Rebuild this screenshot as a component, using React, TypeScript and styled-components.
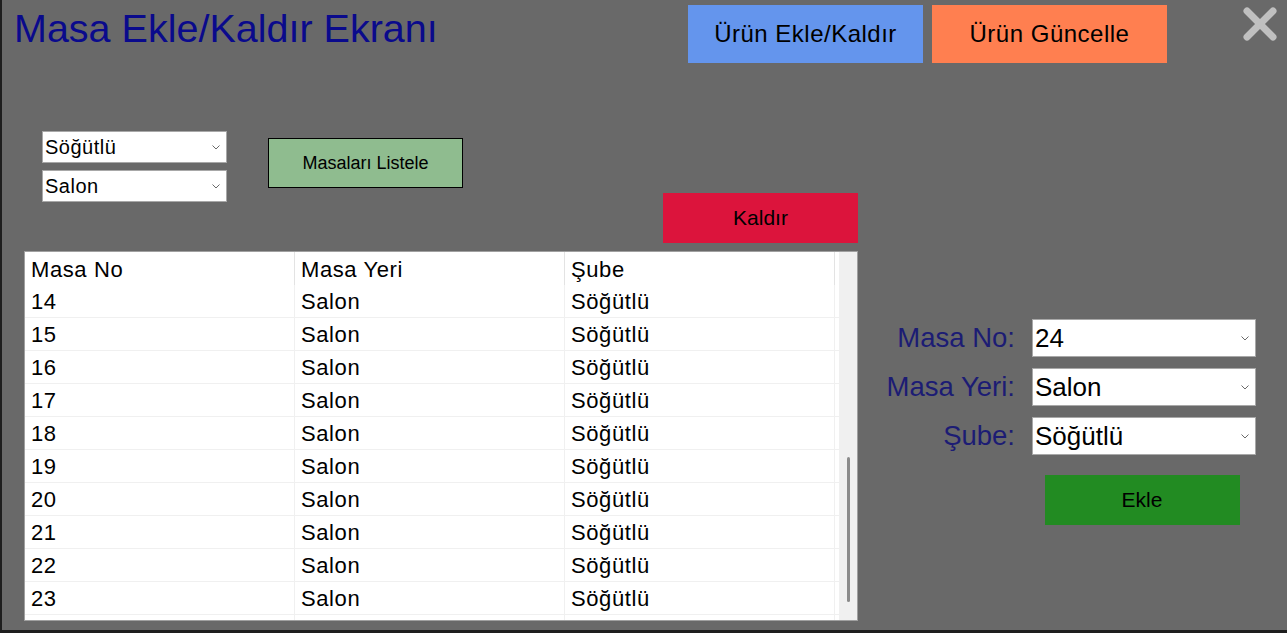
import React from 'react'
import styled, { createGlobalStyle } from 'styled-components'

const GlobalStyle = createGlobalStyle`
  html, body {
    margin: 0;
    padding: 0;
    background: #1e1e1e;
    overflow: hidden;
  }
  * {
    box-sizing: border-box;
  }
`;

const FONT = `"Liberation Sans", Arial, sans-serif`;

const rows = [14, 15, 16, 17, 18, 19, 20, 21, 22, 23];

function Chevron() {
  return (
    <svg width="8" height="5" viewBox="0 0 8 5">
      <polyline points="0.5,0.5 4,4 7.5,0.5" fill="none" stroke="#6a6a6a" strokeWidth="1" />
    </svg>
  );
}

function CloseIcon() {
  return (
    <svg width="36" height="36" viewBox="0 0 36 36">
      <g stroke="#c0c0c0" strokeWidth="7" strokeLinecap="round">
        <line x1="5" y1="5" x2="31" y2="31" />
        <line x1="31" y1="5" x2="5" y2="31" />
      </g>
    </svg>
  );
}

function App() {
  return (
    <>
      <GlobalStyle />
      <Window>
        <Header>
          <Title>Masa Ekle/Kaldır Ekranı</Title>
          <NavButtons>
            <ActionButton $bg="#6495ed" $w={235} $h={58} $size={24} $spacing={0.5}>Ürün Ekle/Kaldır</ActionButton>
            <ActionButton $bg="#ff7f50" $w={235} $h={58} $size={24} $spacing={0.5}>Ürün Güncelle</ActionButton>
          </NavButtons>
          <CloseButton><CloseIcon /></CloseButton>
        </Header>

        <Content>
          <LeftPane>
            <Toolbar>
              <Filters>
                <ComboStack>
                  <Combo $variant="small"><span>Söğütlü</span><Chevron /></Combo>
                  <Combo $variant="small"><span>Salon</span><Chevron /></Combo>
                </ComboStack>
                <ListButton>Masaları Listele</ListButton>
              </Filters>
              <RemoveButton $bg="#dc143c" $w={195} $h={50} $size={21} $spacing={0}>Kaldır</RemoveButton>
            </Toolbar>

            <GridBox>
              <GridBody>
                <HeaderRow>
                  <HeaderCell>Masa No</HeaderCell>
                  <HeaderCell>Masa Yeri</HeaderCell>
                  <HeaderCell>Şube</HeaderCell>
                  <span />
                </HeaderRow>
                {rows.map((n) => (
                  <Row key={n}>
                    <Cell>{n}</Cell>
                    <Cell>Salon</Cell>
                    <Cell>Söğütlü</Cell>
                    <span />
                  </Row>
                ))}
                <Row>
                  <Cell />
                  <Cell />
                  <Cell />
                  <span />
                </Row>
              </GridBody>
              <ScrollTrack>
                <ScrollThumb />
              </ScrollTrack>
            </GridBox>
          </LeftPane>

          <RightPane>
            <Form>
              <Label>Masa No:</Label>
              <Combo $variant="large"><span>24</span><Chevron /></Combo>
              <Label>Masa Yeri:</Label>
              <Combo $variant="large"><span>Salon</span><Chevron /></Combo>
              <Label>Şube:</Label>
              <Combo $variant="large"><span>Söğütlü</span><Chevron /></Combo>
              <AddButton $bg="#228b22" $w={195} $h={50} $size={21} $spacing={0}>Ekle</AddButton>
            </Form>
          </RightPane>
        </Content>
      </Window>
    </>
  )
}

export default App


const Window = styled.div`
  margin-left: 2px;
  width: 1285px;
  height: 630px;
  background: #696969;
  font-family: ${FONT};
  overflow: hidden;
`;

const Header = styled.div`
  display: flex;
  align-items: flex-start;
  padding: 0 9px 0 12px;
  height: 63px;
`;

const Title = styled.h1`
  flex: 1;
  margin: 8px 0 0 0;
  font-size: 39.5px;
  line-height: 40px;
  font-weight: normal;
  color: #0a0a8c;
  white-space: nowrap;
`;

const NavButtons = styled.div`
  display: flex;
  gap: 9px;
  margin-top: 5px;
`;

const ActionButton = styled.button<{ $bg: string; $w: number; $h: number; $size: number; $spacing: number }>`
  width: ${(p) => p.$w}px;
  height: ${(p) => p.$h}px;
  background: ${(p) => p.$bg};
  border: none;
  padding: 0;
  font-family: ${FONT};
  font-size: ${(p) => p.$size}px;
  letter-spacing: ${(p) => p.$spacing}px;
  color: #000;
  display: flex;
  align-items: center;
  justify-content: center;
`;

const CloseButton = styled.div`
  margin: 6px 0 0 75px;
  width: 36px;
  height: 36px;
  display: flex;
`;

const Content = styled.div`
  display: flex;
  padding-left: 22px;
  margin-top: 68px;
`;

const LeftPane = styled.div`
  width: 834px;
  display: flex;
  flex-direction: column;
`;

const Toolbar = styled.div`
  display: flex;
  justify-content: space-between;
  height: 112px;
`;

const Filters = styled.div`
  display: flex;
  align-items: flex-start;
  padding-left: 18px;
`;

const ComboStack = styled.div`
  display: flex;
  flex-direction: column;
  gap: 7px;
`;

const Combo = styled.div<{ $variant: 'small' | 'large' }>`
  width: ${(p) => (p.$variant === 'small' ? 185 : 224)}px;
  height: ${(p) => (p.$variant === 'small' ? 32 : 38)}px;
  background: #fff;
  border: 1px solid #a8a8a8;
  display: flex;
  align-items: center;
  justify-content: space-between;
  padding: 0 6px 0 2px;
  font-size: ${(p) => (p.$variant === 'small' ? 20 : 26)}px;
  letter-spacing: ${(p) => (p.$variant === 'small' ? 0.5 : 0)}px;
  color: #000;

  > svg {
    flex-shrink: 0;
  }
`;

const ListButton = styled.button`
  margin: 7px 0 0 41px;
  width: 195px;
  height: 50px;
  background: #8fbc8f;
  border: 1px solid #000;
  padding: 0;
  font-family: ${FONT};
  font-size: 18px;
  color: #000;
`;

const RemoveButton = styled(ActionButton)`
  align-self: flex-end;
`;

const GridBox = styled.div`
  margin-top: 8px;
  height: 370px;
  display: flex;
  background: #fff;
  border: 1px solid #a0a0a0;
  overflow: hidden;
`;

const GridBody = styled.div`
  flex: 1;
  display: flex;
  flex-direction: column;
  overflow: hidden;
`;

const HeaderRow = styled.div`
  display: grid;
  grid-template-columns: 270px 270px 270px 4px;
  height: 33px;
  flex-shrink: 0;
`;

const Row = styled(HeaderRow)`
  border-bottom: 1px solid #f0f0f0;
`;

const Cell = styled.div`
  padding: 1px 0 0 6px;
  font-size: 22px;
  letter-spacing: 0.6px;
  line-height: 32px;
  color: #000;
  border-right: 1px solid #f0f0f0;
  white-space: nowrap;
`;

const HeaderCell = styled(Cell)`
  line-height: 33px;
  border-right-color: #e3e3e3;
`;

const ScrollTrack = styled.div`
  width: 18px;
  background: #f0f0f0;
  display: flex;
  justify-content: center;
  padding-top: 205px;
`;

const ScrollThumb = styled.div`
  width: 3px;
  height: 145px;
  border-radius: 2px;
  background: #8b8b8b;
`;

const RightPane = styled.div`
  flex: 1;
  display: flex;
  justify-content: flex-end;
  padding-right: 31px;
`;

const Form = styled.div`
  margin-top: 188px;
  display: grid;
  grid-template-columns: auto 224px;
  grid-auto-rows: 38px;
  column-gap: 17px;
  row-gap: 11px;
  align-content: start;
`;

const Label = styled.div`
  font-size: 27.5px;
  line-height: 38px;
  color: #1c1c74;
  text-align: right;
  white-space: nowrap;
`;

const AddButton = styled(ActionButton)`
  grid-column: 2;
  justify-self: center;
  margin-top: 9px;
  transform: translateX(-2px);
`;
